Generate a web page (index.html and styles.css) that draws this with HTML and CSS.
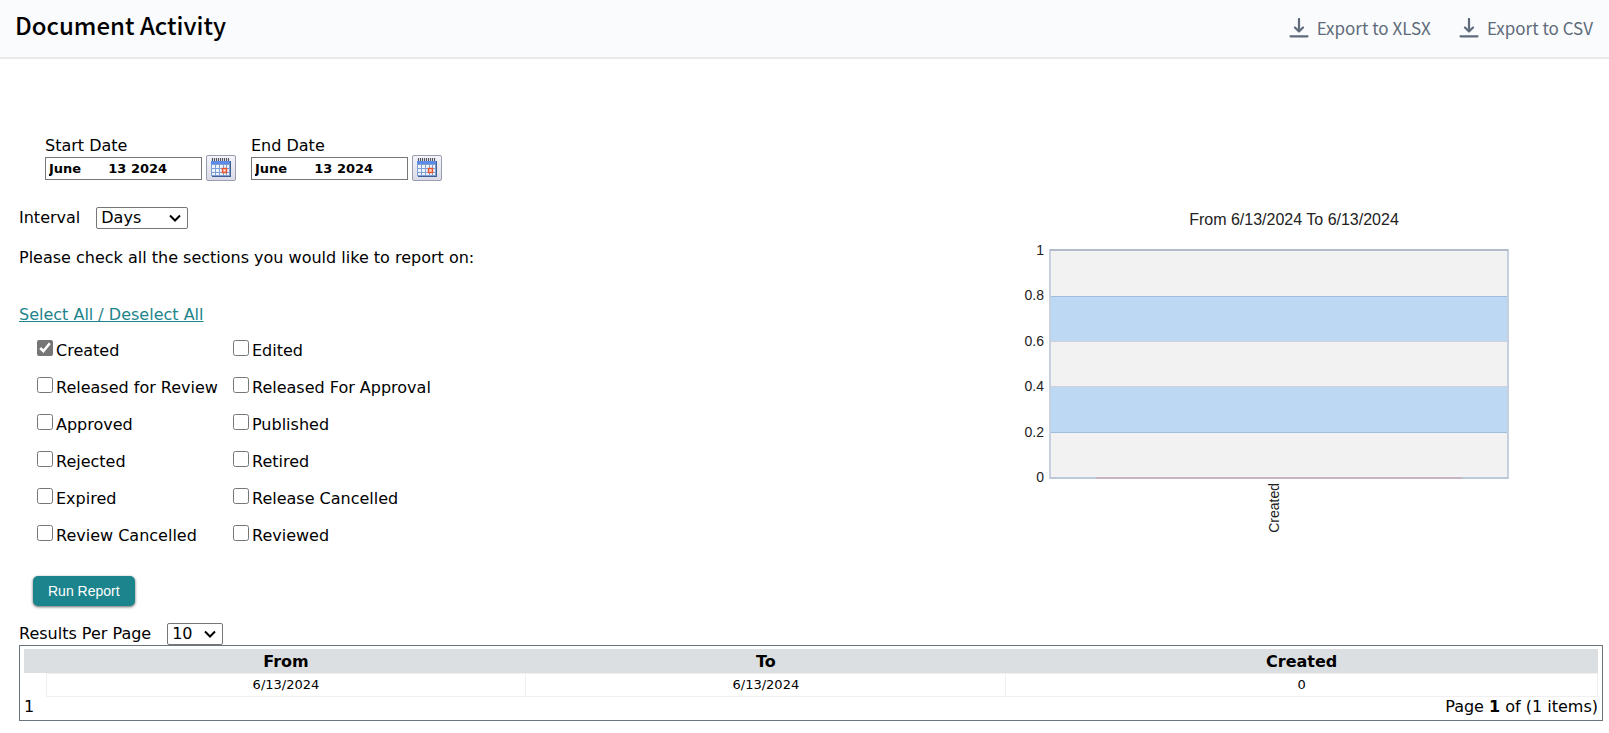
FILE: index.html
```html
<!DOCTYPE html>
<html lang="en">
<head>
<meta charset="utf-8">
<title>Document Activity</title>
<link rel="stylesheet" href="styles.css">
</head>
<body>
<svg class="defs" width="0" height="0" aria-hidden="true">
  <symbol id="download" viewBox="0 0 20 20">
    <path d="M10 1v12.500M6 9.500l4 4 4-4" fill="none" stroke="#5f6b7a" stroke-width="2.200" stroke-linecap="round" stroke-linejoin="round"/>
    <path d="M1.500 18.300h17" stroke="#5f6b7a" stroke-width="2.200" stroke-linecap="round"/>
  </symbol>
  <symbol id="calendar" viewBox="0 0 20 20">
    <rect x="1" y="3" width="19" height="16" fill="#3f5f94"/>
    <rect x="0" y="2" width="19" height="16" fill="#7f9fd0"/>
    <rect x="0" y="3" width="19" height="3" fill="#5c8be8"/>
    <path d="M0 1.500h19" stroke="#dde" stroke-width="3"/>
    <path d="M1 1.500h18" stroke="#555" stroke-width="3" stroke-dasharray="1 1"/>
    <path d="M1 7h3v3H1zM5 7h3v3H5zM9 7h3v3H9zM13 7h2v3h-2zM16 7h2v3h-2zM1 11h3v3H1zM5 11h3v3H5zM9 11h2v3H9zM16 11h2v3h-2zM1 15h3v2H1zM5 15h3v2H5zM9 15h3v2H9zM13 15h2v2h-2zM16 15h2v2h-2z" fill="#eef4ff"/>
    <rect x="11.500" y="10.500" width="4" height="4" fill="#fbd5c8" stroke="#e8552f" stroke-width="1.500"/>
  </symbol>
</svg>

<header class="topbar">
  <h1 class="title">Document Activity</h1>
  <nav class="exports">
    <button type="button" class="export"><svg class="export-icon"><use href="#download"/></svg>Export to XLSX</button>
    <button type="button" class="export"><svg class="export-icon"><use href="#download"/></svg>Export to CSV</button>
  </nav>
</header>

<main class="page">
  <div class="report">
    <form class="filters">
      <div class="dates">
        <div class="date">
          <label class="date-label" for="start">Start Date</label>
          <div class="date-row">
            <input class="date-input" id="start" type="text" value="June&nbsp;&nbsp;&nbsp;&nbsp;&nbsp;&nbsp;13 2024">
            <button type="button" class="picker" aria-label="Pick start date"><svg class="picker-icon"><use href="#calendar"/></svg></button>
          </div>
        </div>
        <div class="date">
          <label class="date-label" for="end">End Date</label>
          <div class="date-row">
            <input class="date-input" id="end" type="text" value="June&nbsp;&nbsp;&nbsp;&nbsp;&nbsp;&nbsp;13 2024">
            <button type="button" class="picker" aria-label="Pick end date"><svg class="picker-icon"><use href="#calendar"/></svg></button>
          </div>
        </div>
      </div>

      <div class="field">
        <label for="interval">Interval</label>
        <select class="select select-wide" id="interval"><option>Days</option><option>Weeks</option><option>Months</option></select>
      </div>
      <p class="prompt">Please check all the sections you would like to report on:</p>
      <a class="toggle" href="#">Select All / Deselect All</a>

      <div class="checks">
        <label class="check"><input type="checkbox" checked>Created</label>
        <label class="check"><input type="checkbox">Edited</label>
        <label class="check"><input type="checkbox">Released for Review</label>
        <label class="check"><input type="checkbox">Released For Approval</label>
        <label class="check"><input type="checkbox">Approved</label>
        <label class="check"><input type="checkbox">Published</label>
        <label class="check"><input type="checkbox">Rejected</label>
        <label class="check"><input type="checkbox">Retired</label>
        <label class="check"><input type="checkbox">Expired</label>
        <label class="check"><input type="checkbox">Release Cancelled</label>
        <label class="check"><input type="checkbox">Review Cancelled</label>
        <label class="check"><input type="checkbox">Reviewed</label>
      </div>
      <button type="button" class="run">Run Report</button>
    </form>

    <svg class="chart" viewBox="0 0 500 340" role="img" aria-label="Documents created from 6/13/2024 to 6/13/2024">
      <text class="chart-title" x="274" y="25">From 6/13/2024 To 6/13/2024</text>
      <rect x="30" y="50" width="458" height="228" fill="#f2f2f2"/>
      <rect x="30" y="96" width="458" height="45" fill="#bdd8f3"/>
      <rect x="30" y="187" width="458" height="45" fill="#bdd8f3"/>
      <path d="M30 141.500h458M30 186.500h458" stroke="#cfd1d6"/>
      <path d="M30 96.500h458M30 232.500h458" stroke="#a0bcdf"/>
      <rect x="30" y="50" width="458" height="228" fill="none" stroke="#c7d0df" stroke-width="2"/>
      <path d="M30 50h458" stroke="#b2bbca" stroke-width="2"/>
      <path d="M30 278h458" stroke="#b2c0d4" stroke-width="1"/>
      <path d="M76 278h366" stroke="#cfa0ae" stroke-width="1"/>
      <g class="chart-ticks">
        <text x="24" y="55">1</text>
        <text x="24" y="100">0.8</text>
        <text x="24" y="146">0.6</text>
        <text x="24" y="191">0.4</text>
        <text x="24" y="237">0.2</text>
        <text x="24" y="282">0</text>
        <text transform="translate(259 283) rotate(-90)">Created</text>
      </g>
    </svg>
  </div>

  <div class="field">
    <label for="size">Results Per Page</label>
    <select class="select" id="size"><option>10</option><option>25</option><option>50</option></select>
  </div>
  <section class="results">
    <table class="grid">
      <colgroup><col class="col-mark"><col class="col-date"><col class="col-date"><col></colgroup>
      <thead><tr><th></th><th>From</th><th>To</th><th>Created</th></tr></thead>
      <tbody><tr><td class="blank"></td><td>6/13/2024</td><td>6/13/2024</td><td>0</td></tr></tbody>
    </table>
    <footer class="pager"><span>1</span><span>Page <b>1</b> of (1 items)</span></footer>
  </section>
</main>
</body>
</html>
```

FILE: styles.css
```css
* { box-sizing: border-box; }

body {
  margin: 0;
  background: #fff;
  color: #000;
  font: 16px/20px Verdana, "DejaVu Sans", sans-serif;
}

button, input, select { font: inherit; color: inherit; }

.defs { display: block; height: 0; }

.topbar {
  display: flex;
  justify-content: space-between;
  align-items: flex-start;
  padding: 10px 16px 11px 15px;
  background: #fafbfd;
  border-bottom: 2px solid #e7e9eb;
  font-family: "Noto Sans CJK SC", sans-serif;
}

.title { margin: 0; font-size: 24px; line-height: 30px; font-weight: 500; }

.exports { display: flex; gap: 28px; }

.export {
  display: flex;
  align-items: center;
  gap: 8px;
  padding: 0;
  border: 0;
  background: none;
  color: #5f6b7a;
  font-size: 17px;
  line-height: 36px;
}

.export-icon { width: 20px; height: 20px; }

.page { padding: 78px 6px 12px 19px; }

.report { display: flex; justify-content: space-between; }

.dates { display: flex; gap: 15px; padding-left: 26px; }

.date-label { display: block; line-height: 18px; }

.date-row { display: flex; align-items: center; gap: 4px; }

.date-input {
  width: 157px;
  height: 23px;
  padding: 0 3px;
  border: 1px solid #767676;
  font-size: 13px;
  font-weight: bold;
}

.picker {
  display: flex;
  align-items: center;
  justify-content: center;
  width: 30px;
  height: 26px;
  padding: 0 1px 0 0;
  border: 1px solid #9a9db0;
  border-radius: 2px;
  background: linear-gradient(#f4f5f9, #d9dae6);
}

.picker-icon { width: 20px; height: 20px; }

.field { display: flex; align-items: center; gap: 16px; }

.filters .field { margin-top: 26px; }

.select {
  appearance: none;
  width: 56px;
  height: 22px;
  padding: 0 4px;
  border: 1px solid #767676;
  border-radius: 2px;
  background: #fff url("data:image/svg+xml,%3Csvg xmlns='http://www.w3.org/2000/svg' viewBox='0 0 12 8'%3E%3Cpath d='M1 1.500l5 5 5-5' fill='none' stroke='black' stroke-width='2'/%3E%3C/svg%3E") no-repeat right 6px center / 12px 8px;
}

.select-wide { width: 92px; }

.prompt { margin: 19px 0 37px; }

.toggle { color: #1c848a; }

.checks {
  display: grid;
  grid-template-columns: 196px auto;
  justify-content: start;
  padding: 7px 0 0 18px;
}

.check { display: flex; align-items: center; gap: 3px; height: 37px; }

.check input { width: 16px; height: 16px; margin: 0 0 5px; accent-color: #767676; }

.run {
  margin: 22px 0 17px 14px;
  padding: 5px 15px;
  border: 0;
  border-radius: 5px;
  background: #1c848c;
  box-shadow: 0 1px 3px rgba(0, 0, 0, 0.6);
  color: #fff;
  font: 14px/20px "Liberation Sans", Arial, sans-serif;
}

.chart { width: 500px; height: 340px; margin: 63px 83px 0 0; }

.chart text { font-family: "Liberation Sans", Arial, sans-serif; fill: #222; text-anchor: end; }

.chart .chart-title { font-size: 16px; text-anchor: middle; }

.chart-ticks text { font-size: 14px; }

.results { padding: 3px 4px; border: 1px solid #6a757d; }

.grid { width: 100%; border-collapse: collapse; table-layout: fixed; }

.col-mark { width: 22px; }

.col-date { width: 30.5%; }

.grid th { height: 24px; padding: 3px 0 0; background: #dcdfe2; }

.grid td { height: 23px; padding: 0; border: 1px solid #f0f0f1; text-align: center; font-size: 13px; }

.grid .blank { border-width: 0; }

.pager { display: flex; justify-content: space-between; }
```
